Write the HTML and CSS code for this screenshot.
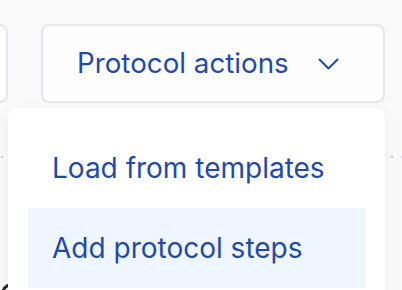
FILE: index.html
```html
<!DOCTYPE html>
<html lang="en">
<head>
<meta charset="utf-8">
<link rel="stylesheet" href="styles.css">
</head>
<body>
<div class="page">
  <div class="toolbar">
    <button class="btn btn-prev" type="button" aria-label="Previous"></button>
    <button class="btn btn-actions" type="button">
      <span class="btn-label">Protocol actions</span>
      <svg class="chevron" width="21" height="13" viewBox="0 0 21 13" aria-hidden="true">
        <path d="M1.5 1.5 L10.5 10.5 L19.5 1.5" fill="none" stroke="#1f4ba5" stroke-width="2" stroke-linecap="round" stroke-linejoin="round"/>
      </svg>
    </button>
  </div>
  <div class="content">
    <div class="divider"></div>
    <div class="under-arc"></div>
  </div>
  <div class="menu">
    <div class="menu-item">Load from templates</div>
    <div class="menu-item active">Add protocol steps</div>
  </div>
</div>
</body>
</html>
```
FILE: styles.css
```css
html, body {
  margin: 0;
  padding: 0;
}
body {
  background: #f9f9fa;
  font-family: Inter, "Noto Sans", sans-serif;
  width: 402px;
  height: 290px;
  overflow: hidden;
}
.page {
  position: relative;
  width: 402px;
  height: 290px;
  overflow: hidden;
}
.toolbar {
  display: flex;
  align-items: stretch;
  gap: 33px;
  padding-top: 24px;
  height: 79px;
}
.btn {
  box-sizing: border-box;
  height: 79px;
  border: 2px solid #e6e6ec;
  border-radius: 8px;
  background: #fdfdfe;
  font-family: Inter, "Noto Sans", sans-serif;
  color: #1f4ba5;
  padding: 0;
  margin: 0;
}
.btn-prev {
  width: 100px;
  margin-left: -92px;
}
.btn-actions {
  width: 344px;
  display: flex;
  align-items: center;
  padding-left: 34px;
  font-size: 27.75px;
  font-weight: 400;
}
.btn-label {
  line-height: 1;
}
.chevron {
  margin-left: 29.5px;
  margin-top: 2px;
}
.content {
  padding-top: 53px;
}
.divider {
  height: 2px;
  background-image: linear-gradient(to right, #c9c9cf 0, #c9c9cf 2px, transparent 2px, transparent 10px);
  background-size: 10px 2px;
  background-position: 1px 0;
}
.under-arc {
  margin-top: 124px;
  margin-left: 2px;
  width: 10px;
  height: 16px;
  box-sizing: border-box;
  border-left: 3px solid #2a2a2a;
  border-top: 3px solid #2a2a2a;
  border-radius: 10px 0 0 0;
  transform: rotate(18deg);
}
.menu {
  position: absolute;
  left: 8px;
  top: 108px;
  width: 377px;
  height: 200px;
  box-sizing: border-box;
  padding: 20px 19px 0 20px;
  background: #ffffff;
  border-radius: 8px;
  box-shadow: 0 4px 14px rgba(0, 0, 0, 0.05);
}
.menu-item {
  height: 80px;
  display: flex;
  align-items: center;
  padding-left: 24px;
  font-size: 28px;
  color: #1f4ba5;
}
.menu-item.active {
  background: #eff6ff;
}
```
